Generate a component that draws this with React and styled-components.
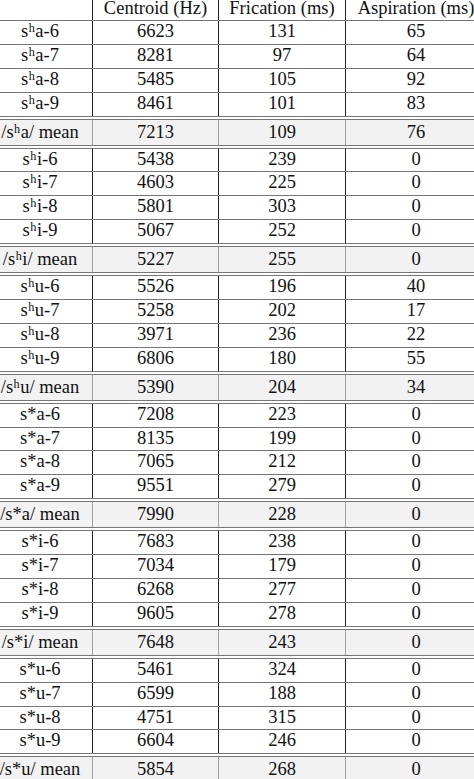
import React from 'react';
import styled, { createGlobalStyle } from 'styled-components';

const Global = createGlobalStyle`
  html, body { margin: 0; padding: 0; background: #ffffff; }
  body { font-family: "Liberation Serif", "Times New Roman", serif; }
`;

const COLS = '105px 126px 127px 140px';

const Page = styled.div`
  width: 474px;
  height: 779px;
  overflow: hidden;
  background: #ffffff;
  color: #111111;
  font-family: "Liberation Serif", "Times New Roman", serif;
  font-size: 18.5px;
`;

const Table = styled.div`
  display: flex;
  flex-direction: column;
  width: 498px;
  margin-left: -12px;
`;

const HeaderRow = styled.div`
  display: grid;
  grid-template-columns: ${COLS};
  height: 20px;
`;

const HeaderCell = styled.div`
  line-height: 16px;
  padding-bottom: 4px;
  text-align: center;
  white-space: nowrap;
  border-right: ${(p) => (p.$last ? 'none' : '1px solid #222')};
`;

const Group = styled.div`
  display: flex;
  flex-direction: column;
`;

const DataRow = styled.div`
  display: grid;
  grid-template-columns: ${COLS};
  border-top: 1px solid #767676;
  border-bottom: ${(p) => (p.$closing ? '1px solid #767676' : 'none')};
`;

const MeanRow = styled.div`
  display: grid;
  grid-template-columns: ${COLS};
  margin: 2px 0;
  background: #f2f2f2;
  border-top: 1px solid #767676;
  border-bottom: 1px solid #767676;
`;

const Cell = styled.div`
  height: ${(p) => (p.$mean ? '25px' : '22.9px')};
  line-height: ${(p) => (p.$mean ? '24px' : '21.9px')};
  padding-bottom: 1px;
  box-sizing: border-box;
  text-align: center;
  white-space: nowrap;
  border-right: ${(p) =>
    p.$last ? 'none' : p.$mean ? '1px solid #a0a0a0' : '1px solid #222'};
`;

const Sup = styled.span`
  font-size: 0.66em;
  line-height: 0;
  vertical-align: 5px;
  margin: 0 0.5px;
`;

const groups = [
  {
    base: 's',
    sup: 'h',
    vowel: 'a',
    rows: [
      ['6623', '131', '65'],
      ['8281', '97', '64'],
      ['5485', '105', '92'],
      ['8461', '101', '83'],
    ],
    mean: ['7213', '109', '76'],
  },
  {
    base: 's',
    sup: 'h',
    vowel: 'i',
    rows: [
      ['5438', '239', '0'],
      ['4603', '225', '0'],
      ['5801', '303', '0'],
      ['5067', '252', '0'],
    ],
    mean: ['5227', '255', '0'],
  },
  {
    base: 's',
    sup: 'h',
    vowel: 'u',
    rows: [
      ['5526', '196', '40'],
      ['5258', '202', '17'],
      ['3971', '236', '22'],
      ['6806', '180', '55'],
    ],
    mean: ['5390', '204', '34'],
  },
  {
    base: 's*',
    vowel: 'a',
    rows: [
      ['7208', '223', '0'],
      ['8135', '199', '0'],
      ['7065', '212', '0'],
      ['9551', '279', '0'],
    ],
    mean: ['7990', '228', '0'],
  },
  {
    base: 's*',
    vowel: 'i',
    rows: [
      ['7683', '238', '0'],
      ['7034', '179', '0'],
      ['6268', '277', '0'],
      ['9605', '278', '0'],
    ],
    mean: ['7648', '243', '0'],
  },
  {
    base: 's*',
    vowel: 'u',
    rows: [
      ['5461', '324', '0'],
      ['6599', '188', '0'],
      ['4751', '315', '0'],
      ['6604', '246', '0'],
    ],
    mean: ['5854', '268', '0'],
  },
];

function Label({ g, suffix, mean }) {
  return (
    <>
      {mean ? '/' : ''}
      {g.base}
      {g.sup ? <Sup>{g.sup}</Sup> : null}
      {g.vowel}
      {mean ? '/ mean' : suffix}
    </>
  );
}

export default function App() {
  return (
    <Page>
      <Global />
      <Table>
        <HeaderRow>
          <HeaderCell />
          <HeaderCell>Centroid (Hz)</HeaderCell>
          <HeaderCell>Frication (ms)</HeaderCell>
          <HeaderCell $last>Aspiration (ms)</HeaderCell>
        </HeaderRow>
        {groups.map((g, gi) => (
          <Group key={gi}>
            {g.rows.map((r, ri) => (
              <DataRow key={ri} $closing={ri === g.rows.length - 1}>
                <Cell>
                  <Label g={g} suffix={`-${ri + 6}`} />
                </Cell>
                <Cell>{r[0]}</Cell>
                <Cell>{r[1]}</Cell>
                <Cell $last>{r[2]}</Cell>
              </DataRow>
            ))}
            <MeanRow>
              <Cell $mean>
                <Label g={g} mean />
              </Cell>
              <Cell $mean>{g.mean[0]}</Cell>
              <Cell $mean>{g.mean[1]}</Cell>
              <Cell $mean $last>{g.mean[2]}</Cell>
            </MeanRow>
          </Group>
        ))}
      </Table>
    </Page>
  );
}
